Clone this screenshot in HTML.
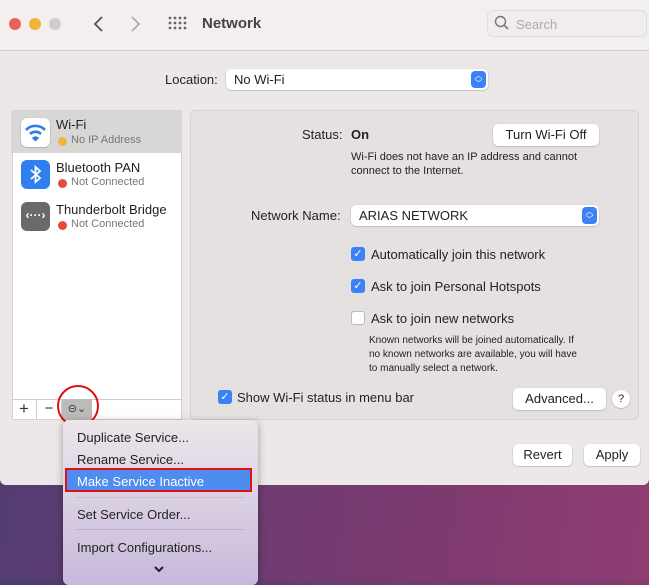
<!DOCTYPE html>
<html><head><style>
*{box-sizing:border-box;margin:0;padding:0}
body{width:649px;height:579px;overflow:hidden;position:relative;font-family:"Liberation Sans",sans-serif;color:#222;font-size:13px;
background:linear-gradient(100deg,#4a3d72 0%,#6a3c72 40%,#7d3a6f 70%,#8f3d72 100%)}
.win{position:absolute;left:0;top:0;width:649px;height:485px;background:#ece8e8;border-radius:0 0 6px 6px}
.a{position:absolute;white-space:nowrap}
.dot{position:absolute;width:12px;height:12px;border-radius:50%}
.btn{position:absolute;background:#fff;border-radius:5px;box-shadow:0 0.5px 1.5px rgba(0,0,0,.3);text-align:center;font-size:13px}
.cb{position:absolute;width:14px;height:14px;border-radius:3px;background:#3b82f6;color:#fff;font-size:11px;line-height:14px;text-align:center}
.cb.off{background:#fff;border:1px solid #bbb}
.sd{position:absolute;width:9px;height:9px;border-radius:50%}
.mi{position:absolute;left:77px;font-size:13px;color:#222}
</style></head><body>
<div class="win">
 <div class="a" style="left:0;top:0;width:649px;height:50px;background:#f3efef"></div>
 <div class="dot" style="left:9px;top:18px;background:#ec5f56"></div>
 <div class="dot" style="left:29px;top:18px;background:#f0b53a"></div>
 <div class="dot" style="left:49px;top:18px;background:#cfcccc"></div>
 <svg class="a" style="left:92px;top:14px" width="14" height="20"><path d="M10 3 L3 10 L10 17" stroke="#555" stroke-width="1.8" fill="none"/></svg>
 <svg class="a" style="left:128px;top:14px" width="14" height="20"><path d="M4 3 L11 10 L4 17" stroke="#aaa" stroke-width="1.8" fill="none"/></svg>
 <svg class="a" style="left:168px;top:16px" width="20" height="16" fill="#666">
  <circle cx="2" cy="2" r="1.4"/><circle cx="7" cy="2" r="1.4"/><circle cx="12" cy="2" r="1.4"/><circle cx="17" cy="2" r="1.4"/>
  <circle cx="2" cy="7" r="1.4"/><circle cx="7" cy="7" r="1.4"/><circle cx="12" cy="7" r="1.4"/><circle cx="17" cy="7" r="1.4"/>
  <circle cx="2" cy="12" r="1.4"/><circle cx="7" cy="12" r="1.4"/><circle cx="12" cy="12" r="1.4"/><circle cx="17" cy="12" r="1.4"/></svg>
 <div class="a" style="left:202px;top:15px;font-size:15px;font-weight:bold;color:#444">Network</div>
 <div class="a" style="left:487px;top:10px;width:160px;height:27px;border:1px solid #ddd;border-radius:6px;background:#f1eded"></div>
 <svg class="a" style="left:494px;top:15px" width="16" height="16"><circle cx="6.5" cy="6.5" r="5" stroke="#777" stroke-width="1.4" fill="none"/><path d="M10 10 L14 14" stroke="#777" stroke-width="1.6"/></svg>
 <div class="a" style="left:516px;top:17px;color:#aaa;font-size:13px">Search</div>
 <div class="a" style="left:0;top:50px;width:649px;height:1px;background:#cfcbcb"></div>

 <div class="a" style="left:165px;top:72px">Location:</div>
 <div class="btn" style="left:226px;top:69px;width:262px;height:21px;text-align:left;padding:3px 8px">No Wi-Fi</div>
 <div class="a" style="left:471px;top:71px;width:15px;height:17px;border-radius:4px;background:#3b82f6;color:#fff;font-size:8px;line-height:8px;text-align:center;padding-top:1px">︿<br>﹀</div>

 <div class="a" style="left:12px;top:110px;width:170px;height:310px;background:#fff;border:1px solid #d6d2d2"></div>
 <div class="a" style="left:11px;top:111px;width:171px;height:42px;background:#d9d6d6"></div>
 <div class="a" style="left:21px;top:118px;width:29px;height:29px;border-radius:6px;background:#fff;box-shadow:0 0.5px 1.5px rgba(0,0,0,.3)"></div>
 <svg class="a" style="left:23px;top:121px" width="25" height="22"><path d="M3 9 A13 13 0 0 1 22 9" stroke="#2d7be5" stroke-width="2.6" fill="none"/><path d="M7 13 A8 8 0 0 1 18 13" stroke="#2d7be5" stroke-width="2.6" fill="none"/><path d="M10 17 A4 4 0 0 1 15 17 L12.5 19.5Z" fill="#2d7be5" stroke="#2d7be5" stroke-width="1.5"/></svg>
 <div class="a" style="left:56px;top:117px">Wi-Fi</div>
 <div class="sd" style="left:58px;top:137px;background:#f0b53a"></div>
 <div class="a" style="left:71px;top:134px;font-size:11px;color:#777">No IP Address</div>
 <div class="a" style="left:21px;top:160px;width:29px;height:29px;border-radius:6px;background:#2f80ee"></div>
 <svg class="a" style="left:21px;top:160px" width="29" height="29"><path d="M10 10 L19 18 L14.5 22 V7 L19 11 L10 19" stroke="#fff" stroke-width="1.8" fill="none"/></svg>
 <div class="a" style="left:56px;top:160px">Bluetooth PAN</div>
 <div class="sd" style="left:58px;top:179px;background:#e5483f"></div>
 <div class="a" style="left:71px;top:176px;font-size:11px;color:#777">Not Connected</div>
 <div class="a" style="left:21px;top:202px;width:29px;height:29px;border-radius:6px;background:#6a6a6a"></div>
 <div class="a" style="left:21px;top:208px;width:29px;text-align:center;color:#fff;font-size:12px;font-weight:bold">‹···›</div>
 <div class="a" style="left:56px;top:202px">Thunderbolt Bridge</div>
 <div class="sd" style="left:58px;top:221px;background:#e5483f"></div>
 <div class="a" style="left:71px;top:218px;font-size:11px;color:#777">Not Connected</div>
 <div class="a" style="left:12px;top:399px;width:170px;height:1px;background:#ccc"></div>
 <div class="a" style="left:12px;top:399px;width:25px;height:21px;border-right:1px solid #ccc;text-align:center;font-size:17px;line-height:20px;color:#333">+</div>
 <div class="a" style="left:37px;top:399px;width:25px;height:21px;border-right:1px solid #ccc;text-align:center;font-size:15px;line-height:19px;color:#333">−</div>
 <div class="a" style="left:62px;top:399px;width:30px;height:21px;background:#bdbaba;text-align:center;font-size:11px;line-height:21px;color:#333">⊝⌄</div>
 <div class="a" style="left:57px;top:385px;width:42px;height:42px;border:2px solid #e01010;border-radius:50%"></div>

 <div class="a" style="left:190px;top:110px;width:449px;height:310px;background:#e5e1e1;border:1px solid #d6d2d2;border-radius:5px"></div>
 <div class="a" style="left:302px;top:127px">Status:</div>
 <div class="a" style="left:351px;top:127px;font-weight:bold">On</div>
 <div class="btn" style="left:493px;top:124px;width:106px;height:22px;line-height:22px">Turn Wi-Fi Off</div>
 <div class="a" style="left:351px;top:150px;font-size:11px;line-height:14px">Wi-Fi does not have an IP address and cannot<br>connect to the Internet.</div>
 <div class="a" style="left:251px;top:208px">Network Name:</div>
 <div class="btn" style="left:351px;top:205px;width:248px;height:21px;text-align:left;padding:3px 8px">ARIAS NETWORK</div>
 <div class="a" style="left:582px;top:207px;width:15px;height:17px;border-radius:4px;background:#3b82f6;color:#fff;font-size:8px;line-height:8px;text-align:center;padding-top:1px">︿<br>﹀</div>
 <div class="cb" style="left:351px;top:247px">✓</div><div class="a" style="left:371px;top:247px">Automatically join this network</div>
 <div class="cb" style="left:351px;top:279px">✓</div><div class="a" style="left:371px;top:279px">Ask to join Personal Hotspots</div>
 <div class="cb off" style="left:351px;top:311px"></div><div class="a" style="left:371px;top:311px">Ask to join new networks</div>
 <div class="a" style="left:369px;top:334px;font-size:10px;line-height:14px">Known networks will be joined automatically. If<br>no known networks are available, you will have<br>to manually select a network.</div>
 <div class="cb" style="left:218px;top:390px">✓</div><div class="a" style="left:237px;top:390px">Show Wi-Fi status in menu bar</div>
 <div class="btn" style="left:513px;top:388px;width:93px;height:22px;line-height:22px">Advanced...</div>
 <div class="btn" style="left:612px;top:390px;width:18px;height:18px;border-radius:50%;line-height:18px;font-size:11px">?</div>
 <div class="btn" style="left:513px;top:444px;width:59px;height:22px;line-height:22px">Revert</div>
 <div class="btn" style="left:584px;top:444px;width:56px;height:22px;line-height:22px">Apply</div>
</div>

<div class="a" style="left:63px;top:420px;width:195px;height:165px;border-radius:6px;background:linear-gradient(#ece6ea,#c7b9db);box-shadow:0 2px 8px rgba(0,0,0,.35)"></div>
<div class="mi" style="top:430px">Duplicate Service...</div>
<div class="mi" style="top:452px">Rename Service...</div>
<div class="a" style="left:66px;top:469px;width:186px;height:22px;background:#4e8def"></div>
<div class="a" style="left:65px;top:468px;width:187px;height:24px;border:2px solid #e01010"></div>
<div class="mi" style="top:474px;color:#fff">Make Service Inactive</div>
<div class="a" style="left:76px;top:497px;width:168px;height:1px;background:#c9bfca"></div>
<div class="mi" style="top:507px">Set Service Order...</div>
<div class="a" style="left:76px;top:529px;width:168px;height:1px;background:#bcb0c8"></div>
<div class="mi" style="top:540px">Import Configurations...</div>
<svg class="a" style="left:153px;top:565px" width="12" height="8"><path d="M2 2 L6 6 L10 2" stroke="#222" stroke-width="2" fill="none"/></svg>
</body></html>
